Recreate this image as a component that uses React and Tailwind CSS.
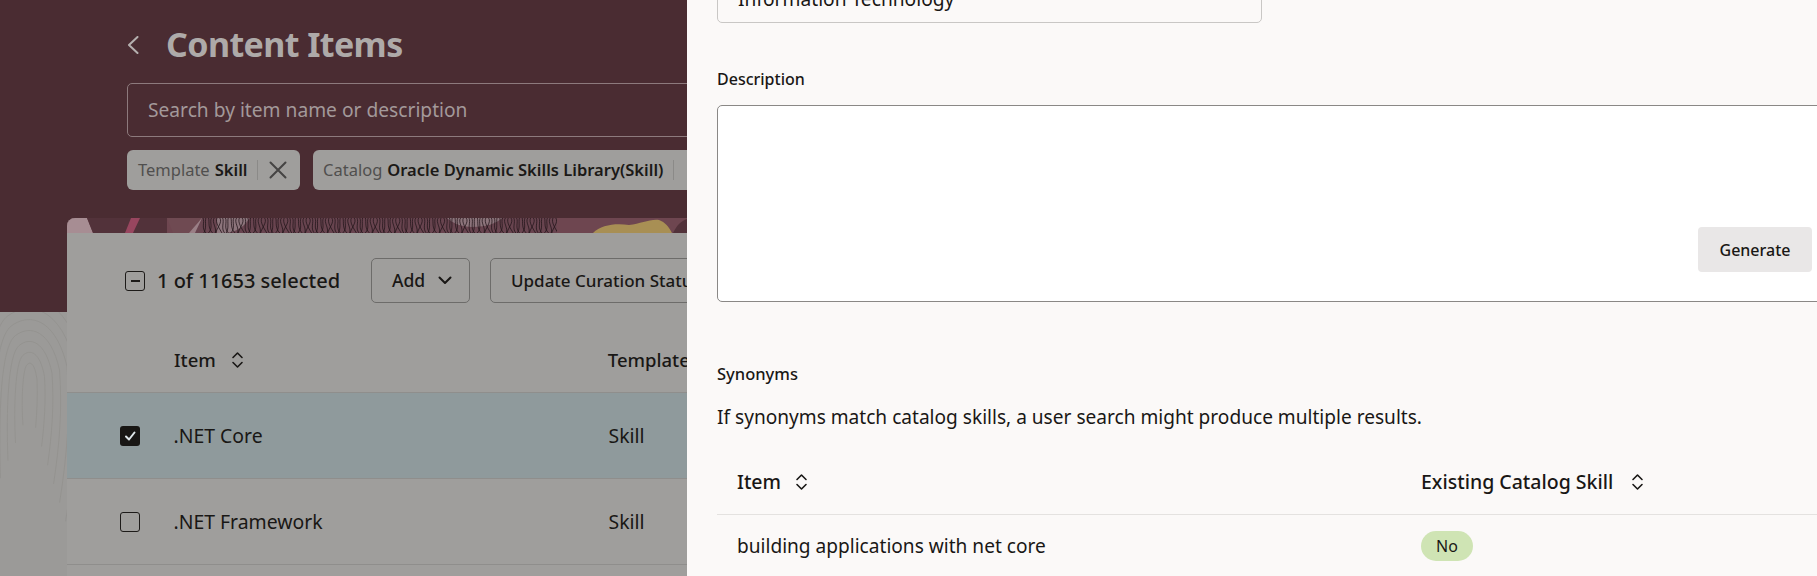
import React from 'react';

const FONT = 'font-["Noto_Sans",sans-serif]';

// concentric contour lines for the faint page texture
const contours = Array.from({ length: 36 }, (_, i) => {
  const rx = 7 + i * 7.5;
  const ry = 24 + i * 11;
  const cy = 75;
  return `M${30 - rx} ${cy + ry * 1.6} C${30 - rx - 2} ${cy + ry * 0.5} ${30 - rx} ${cy - ry * 0.7} ${30 - rx * 0.5} ${cy - ry * 0.9} C${30} ${cy - ry * 1.1} ${30 + rx * 0.7} ${cy - ry} ${30 + rx} ${cy - ry * 0.3} C${30 + rx * 1.1} ${cy + ry * 0.4} ${30 + rx} ${cy + ry} ${30 + rx * 0.8} ${cy + ry * 1.7}`;
});

// wavy dark strokes for the banner fingerprint pattern
const ridges = Array.from({ length: 128 }, (_, i) => {
  const x = 1 + i * 2.8;
  const lean = [3, -2, 4, -3, 1, 5, -4, 2][i % 8];
  const bend = [2, -2, 3, -1, -3, 2, 1, -2][(i * 3) % 8];
  return `M${x} 0 C${x + bend} 4 ${x - bend} 10 ${x + lean} 15`;
});

const SortIcon = ({ className = '' }) => (
  <svg viewBox="0 0 13 18" className={`h-[18px] w-[13px] ${className}`} fill="none" stroke="currentColor" strokeWidth="1.6" strokeLinecap="round" strokeLinejoin="round">
    <path d="M2 6.5 6.5 2 11 6.5M2 11.5 6.5 16 11 11.5" />
  </svg>
);

const Chevron = ({ className = '' }) => (
  <svg viewBox="0 0 14 9" className={className} fill="none" stroke="currentColor" strokeWidth="2" strokeLinecap="round" strokeLinejoin="round">
    <path d="M1.5 1.5 7 7l5.5-5.5" />
  </svg>
);

const Row = ({ name, checked }) => (
  <div className={`flex h-[86px] items-center border-b border-[#8f8e8c] pl-[53px] ${checked ? 'bg-[#8f9a9c]' : ''}`}>
    {checked ? (
      <span className="flex h-5 w-5 items-center justify-center rounded-[3px] bg-[#191715] text-[#dfe7ea]">
        <svg viewBox="0 0 14 14" className="h-3.5 w-3.5" fill="none" stroke="currentColor" strokeWidth="2" strokeLinecap="round" strokeLinejoin="round">
          <path d="M3 7.5 6 10.5 11.5 3.5" />
        </svg>
      </span>
    ) : (
      <span className="h-5 w-5 rounded-[3px] border-[1.5px] border-[#1d1b19]" />
    )}
    <span className="ml-[33.5px] w-[435px] text-[19.4px] text-[#191715]">{name}</span>
    <span className="text-[19.4px] text-[#191715]">Skill</span>
  </div>
);

const App = () => {
  return (
    <div className={`relative h-[576px] w-[1817px] overflow-hidden bg-[#9b9a98] ${FONT}`}>
      <svg viewBox="0 0 67 264" className="absolute left-0 top-[312px] h-[264px] w-[67px]" fill="none" stroke="#93928f" strokeWidth="0.9">
        {contours.map((d, i) => (
          <path key={i} d={d} />
        ))}
      </svg>

      <div className="h-[312px] bg-[#4a2c32] pl-[127px]">
        <div className="flex h-[83px] items-center pt-[6px]">
          <svg viewBox="0 0 12 18" className="h-[18px] w-3 text-[#b5b0af]" fill="none" stroke="currentColor" strokeWidth="2" strokeLinecap="round" strokeLinejoin="round">
            <path d="M10.5 1 2 9l8.5 8" />
          </svg>
          <h1 className="ml-[27px] text-[34px] font-bold tracking-[-0.6px] text-[#aeaaa9]">Content Items</h1>
        </div>
        <div className="flex h-[54px] w-[800px] items-center rounded-[5px] border border-[#8d7a7d] pl-[20px] text-[19.2px] text-[#a3999a]">
          Search by item name or description
        </div>
        <div className="mt-[13px] flex gap-[13px] text-[16.5px]">
          <div className="flex h-10 w-[173px] items-center rounded-[6px] bg-[#9f9e9c] pl-[11px]">
            <span className="text-[#504f4e]">Template</span>
            <span className="ml-[5px] font-semibold text-[#1b1917]">Skill</span>
            <span className="ml-[10px] h-[20px] w-px bg-[#8b8a88]" />
            <svg viewBox="0 0 18 18" className="ml-[11px] h-[18px] w-[18px] text-[#454443]" fill="none" stroke="currentColor" strokeWidth="2" strokeLinecap="round">
              <path d="M1.5 1.5 16.5 16.5M16.5 1.5 1.5 16.5" />
            </svg>
          </div>
          <div className="flex h-10 w-[500px] items-center rounded-[6px] bg-[#9f9e9c] pl-[10px]">
            <span className="text-[#504f4e]">Catalog</span>
            <span className="ml-[5px] font-semibold text-[#1b1917]">Oracle Dynamic Skills Library(Skill)</span>
            <span className="ml-[10px] h-[20px] w-px bg-[#8b8a88]" />
          </div>
        </div>
      </div>

      <div className="relative ml-[67px] mt-[-94px] h-[358px] overflow-hidden rounded-t-[8px] bg-[#9f9e9c]">
        <div className="relative h-[15px] bg-[#6e4650]">
          <svg viewBox="0 0 620 15" className="absolute left-0 top-0 h-[15px] w-[620px]" preserveAspectRatio="none">
            <path d="M0 0H20L26 15H0Z" fill="#a78d93" />
            <path d="M20 0H100V15H26Z" fill="#52323a" />
            <path d="M64 0H73L66 15H58Z" fill="#98465f" />
            <path d="M100 0H140L128 15H106Z" fill="#6f4a52" />
            <path d="M135 0H141L135 15H122Z" fill="#9a7f86" />
            <path d="M135 0H490V15H128Z" fill="#68444f" />
            <path d="M150 0H182C180 6 172 13 160 15H150Z" fill="#8d757c" />
            <path d="M380 0H435C430 5 420 9 405 9C395 9 385 5 380 0Z" fill="#8d757c" />
            <path d="M526 15C534 7 548 5 562 7C574 6 582 1 592 2C598 4 602 9 605 15Z" fill="#a88f54" />
            <path d="M606 15C610 7 614 3 620 1V15Z" fill="#52323a" />
          </svg>
          <svg viewBox="0 0 355 15" className="absolute left-[135px] top-0 h-[15px] w-[355px]" fill="none" stroke="#24161c" strokeWidth="0.8">
            {ridges.map((d, i) => (
              <path key={i} d={d} />
            ))}
          </svg>
        </div>

        <div className="flex h-[92px] items-center pb-[1px] pl-[58px] pt-[4px]">
          <span className="flex h-5 w-5 items-center justify-center rounded-[3px] border-[1.5px] border-[#1d1b19]">
            <span className="h-[2px] w-[9px] bg-[#1d1b19]" />
          </span>
          <span className="ml-[12px] w-[214px] text-[20px] font-medium text-[#191715]">1 of 11653 selected</span>
          <div className="flex h-[45px] w-[99px] items-center rounded-[5px] border border-[#6d6c6a] pl-[20px] text-[17.5px] font-medium text-[#191715]">
            Add
            <Chevron className="ml-[13px] h-[9px] w-[14px]" />
          </div>
          <div className="ml-[20px] flex h-[45px] w-[260px] items-center rounded-[5px] border border-[#6d6c6a] pl-[20px] text-[17px] font-medium text-[#191715]">
            Update Curation Status
          </div>
        </div>

        <div className="flex h-[68px] items-center border-b border-[#8f8e8c] pl-[107px] pt-[2px] text-[18.5px] font-medium text-[#191715]">
          <span>Item</span>
          <SortIcon className="ml-[15px]" />
          <span className="ml-[364px]">Template</span>
        </div>
        <Row name=".NET Core" checked />
        <Row name=".NET Framework" />
      </div>

      {/* drawer sits over the dimmed page */}
      <div className="absolute right-0 top-0 h-[576px] w-[1130px] overflow-hidden bg-[#fbf9f8] pl-[30px] text-[#191715]">
        <div className="mt-[-30px] flex h-[53px] w-[545px] items-center rounded-[5px] border border-[#c9c7c5] pl-[20px] pt-[6px] text-[19.2px] text-[#191715]">
          Information Technology
        </div>
        <div className="mt-[44px] h-[24px] text-[16px] font-medium leading-6">Description</div>
        <div className="mt-[14px] flex h-[197px] w-[1120px] items-end justify-end rounded-[5px] border border-[#8a8886] bg-white pb-[29px] pr-[24px]">
          <button type="button" className="h-[45px] w-[114px] rounded-[4px] bg-[#e9e7e7] text-[16px] font-medium text-[#191715]">
            Generate
          </button>
        </div>
        <div className="mt-[61px] h-[22px] text-[16.5px] font-medium leading-[22px]">Synonyms</div>
        <p className="mt-[20px] h-[24px] text-[19.1px] leading-6">If synonyms match catalog skills, a user search might produce multiple results.</p>

        <div className="mt-[19px] grid grid-cols-[704px_1fr] border-b border-[#e4e2e0] text-[19.5px] font-medium">
          <div className="flex h-[66px] items-center pl-[20px] pt-[2px]">
            Item
            <SortIcon className="ml-[14px]" />
          </div>
          <div className="flex h-[66px] items-center pt-[2px]">
            Existing Catalog Skill
            <SortIcon className="ml-[18px]" />
          </div>
        </div>
        <div className="grid grid-cols-[704px_1fr] text-[19.1px]">
          <div className="flex h-[62px] items-center pl-[20px]">building applications with net core</div>
          <div className="flex h-[62px] items-center">
            <span className="flex h-[30px] w-[52px] items-center justify-center rounded-full bg-[#cfe4b4] text-[16px]">No</span>
          </div>
        </div>
      </div>
    </div>
  );
};

export default App;
